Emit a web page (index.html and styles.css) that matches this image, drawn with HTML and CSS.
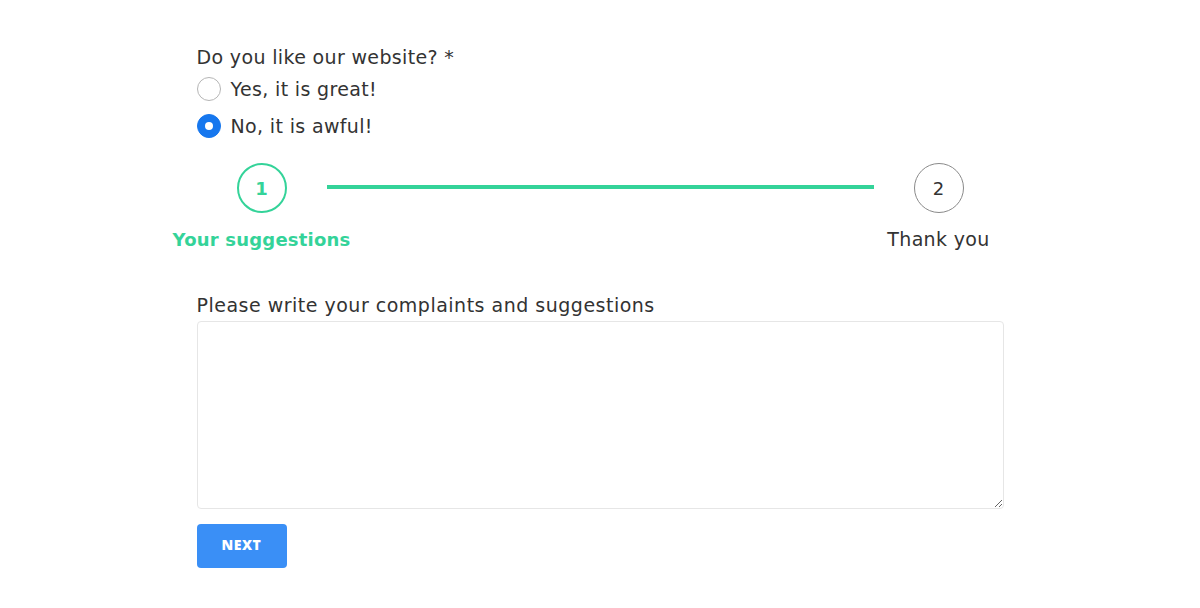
FILE: index.html
```html
<!DOCTYPE html>
<html lang="en">
<head>
<meta charset="utf-8">
<title>Survey</title>
<link rel="stylesheet" href="styles.css">
</head>
<body>
<main class="form">
  <div class="question">Do you like our website? *</div>
  <label class="radio-row">
    <span class="radio"></span>
    <span class="radio-text">Yes, it is great!</span>
  </label>
  <label class="radio-row second">
    <span class="radio checked"></span>
    <span class="radio-text">No, it is awful!</span>
  </label>

  <div class="stepper">
    <div class="step active">
      <div class="circle">1</div>
      <div class="step-label">Your suggestions</div>
    </div>
    <div class="bar"></div>
    <div class="step">
      <div class="circle">2</div>
      <div class="step-label">Thank you</div>
    </div>
  </div>

  <div class="field-label">Please write your complaints and suggestions</div>
  <textarea class="textarea"></textarea>
  <button class="next">NEXT</button>
</main>
</body>
</html>
```

FILE: styles.css
```css
* { box-sizing: border-box; }
html, body { margin: 0; background: #fff; }
body {
  font-family: "DejaVu Sans", "Noto Sans", sans-serif;
  color: #333;
  font-size: 19px;
  letter-spacing: 0.35px;
}
.form {
  width: 807px;
  margin: 0 auto;
  padding-top: 44px;
  display: flex;
  flex-direction: column;
  align-items: flex-start;
}
.question { line-height: 26px; height: 26px; }
.radio-row {
  display: flex;
  align-items: center;
  gap: 10px;
  height: 24px;
  margin-top: 7px;
}
.radio-row.second { margin-top: 13px; }
.radio {
  width: 24px;
  height: 24px;
  border-radius: 50%;
  border: 1px solid #b5b5b5;
  display: flex;
  align-items: center;
  justify-content: center;
}
.radio.checked { background: #1677ee; border-color: #1677ee; }
.radio.checked::after {
  content: "";
  width: 8px;
  height: 8px;
  border-radius: 50%;
  background: #fff;
}
.radio-text { line-height: 26px; }
.stepper {
  align-self: stretch;
  display: flex;
  margin-top: 25px;
}
.step {
  width: 130px;
  display: flex;
  flex-direction: column;
  align-items: center;
}
.circle {
  width: 50px;
  height: 50px;
  border-radius: 50%;
  border: 1px solid #8a8a8a;
  display: flex;
  align-items: center;
  justify-content: center;
  font-size: 18px;
  letter-spacing: 0;
}
.step.active .circle {
  border: 2px solid #34d399;
  color: #34d399;
  font-weight: 700;
}
.step-label {
  margin-top: 13px;
  line-height: 27px;
  height: 26px;
  white-space: nowrap;
}
.step.active .step-label {
  color: #34d399;
  font-weight: 700;
  font-size: 18px;
  letter-spacing: 0.2px;
}
.bar {
  flex: 1;
  height: 4px;
  background: #34d399;
  margin-top: 22px;
}
.field-label {
  margin-top: 40px;
  line-height: 26px;
  height: 26px;
  letter-spacing: 0.5px;
}
.textarea {
  align-self: stretch;
  margin-top: 3px;
  height: 188px;
  border: 1px solid #e6e6e6;
  border-radius: 4px;
  resize: vertical;
  font: inherit;
  display: block;
}
.next {
  margin-top: 15px;
  width: 90px;
  height: 44px;
  padding: 0 0 3px;
  border: 0;
  border-radius: 4px;
  background: #3a8ff6;
  color: #fff;
  font-family: "Open Sans", sans-serif;
  font-weight: 800;
  font-size: 14px;
  letter-spacing: 0.5px;
}
```
